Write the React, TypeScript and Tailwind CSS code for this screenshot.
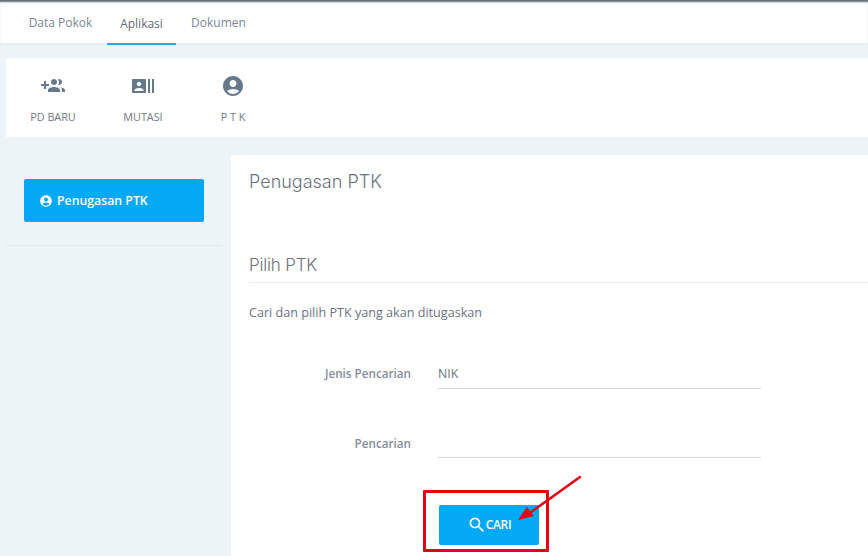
import { MdAccountCircle, MdRecentActors, MdSearch } from "react-icons/md";

const tabs = [
  { label: "Data Pokok", active: false, width: "w-[93px]" },
  { label: "Aplikasi", active: true, width: "w-[69px]" },
  { label: "Dokumen", active: false, width: "w-[85px]" },
];

// group_add versi lama, plus di kiri
function GroupAddIcon({ className }: { className?: string }) {
  return (
    <svg className={className} viewBox="0 0 24 24" fill="currentColor">
      <path d="M8 10H5V7H3v3H0v2h3v3h2v-3h3v-2zm10 1c1.66 0 2.99-1.34 2.99-3S19.66 5 18 5c-.32 0-.63.05-.91.14.57.81.9 1.79.9 2.86s-.34 2.04-.9 2.86c.28.09.59.14.91.14zm-5 0c1.66 0 2.99-1.34 2.99-3S14.66 5 13 5s-3 1.34-3 3 1.34 3 3 3zm6.62 2.16c.83.73 1.38 1.66 1.38 2.84v2h3v-2c0-1.54-2.37-2.49-4.38-2.84zM13 13c-2 0-6 1-6 3v2h12v-2c0-2-4-3-6-3z" />
    </svg>
  );
}

const menus = [
  { label: "PD BARU", icon: GroupAddIcon },
  { label: "MUTASI", icon: MdRecentActors },
  { label: "P T K", icon: MdAccountCircle },
];

export default function App() {
  return (
    <div className="h-[556px] w-[868px] overflow-hidden bg-[#edf4f8] font-['Open_Sans',sans-serif] text-[#6f7a87]">
      {/* Tab atas */}
      <nav className="flex h-[45px] items-stretch border-b-2 border-[#e8eff3] bg-white pl-[14px] shadow-[inset_0_3px_2px_-1px_#5f6a70]">
        {tabs.map((tab) => (
          <div
            key={tab.label}
            className={`${tab.width} -mb-[2px] flex items-center justify-center text-[12px] ${
              tab.active ? "border-b-2 border-[#35a2d8] pt-[5px] text-[#5f6a76]" : "pt-[1px] text-[#7b8794]"
            }`}
          >
            {tab.label}
          </div>
        ))}
      </nav>

      {/* Menu ikon */}
      <div className="mt-[13px] ml-[6px] flex h-[79px] bg-white pl-[2px]">
        {menus.map((menu) => (
          <div key={menu.label} className="flex w-[90px] flex-col items-center pt-[16px]">
            <menu.icon className="h-[24px] w-[24px] text-[#65798b]" />
            <span className="mt-[12px] text-[10.8px] leading-[14px] text-[#6f7a87]">{menu.label}</span>
          </div>
        ))}
      </div>

      <div className="mt-[18px] flex">
        {/* Sidebar */}
        <aside className="ml-[6px] w-[216px]">
          <div className="pt-[24px] pb-[23px] pl-[18px]">
            <button className="flex h-[43px] w-[180px] items-center gap-[4px] rounded-[2px] bg-[#03a9f4] pl-[15px] text-[12.3px] font-semibold text-white">
              <MdAccountCircle className="h-[14px] w-[14px]" />
              <span className="mt-[2px]">Penugasan PTK</span>
            </button>
          </div>
          <div className="border-t border-[#dfe7eb]" />
        </aside>

        {/* Konten */}
        <main className="relative ml-[9px] h-[401px] flex-1 bg-white pl-[18px]">
          <h1 className="pt-[15px] font-['Inter',sans-serif] text-[18px] leading-[24px] font-light text-[#6b7280]">
            Penugasan PTK
          </h1>
          <h2 className="mt-[59px] border-b border-[#e9edf0] pb-[5px] font-['Inter',sans-serif] text-[17px] leading-[24px] font-light tracking-[-0.2px] text-[#6b7280]">
            Pilih PTK
          </h2>
          <p className="mt-[21px] text-[12.6px] leading-[18px] text-[#6b7280]">
            Cari dan pilih PTK yang akan ditugaskan
          </p>

          <div className="mt-[38px] flex items-start">
            <label className="w-[162px] pt-[4px] text-right text-[11.7px] leading-[18px] font-semibold text-[#858d9c]">
              Jenis Pencarian
            </label>
            <div className="ml-[27px] h-[29px] w-[323px] border-b border-[#d6d9de] pt-[5px] text-[12.3px] leading-[18px] text-[#6b7280]">
              NIK
            </div>
          </div>
          <div className="mt-[40px] flex items-start">
            <label className="w-[162px] pt-[5px] text-right text-[11.7px] leading-[18px] font-semibold text-[#858d9c]">
              Pencarian
            </label>
            <div className="ml-[27px] h-[29px] w-[323px] border-b border-[#d6d9de]" />
          </div>

          <div className="mt-[47px] ml-[190px]">
            <button className="flex h-[40px] w-[100px] items-center justify-center gap-0 rounded-[2px] bg-[#03a9f4] text-[12px] font-semibold tracking-[-0.3px] text-white">
              <MdSearch className="-mr-[1px] h-[20px] w-[20px]" />
              CARI
            </button>
          </div>

          {/* Anotasi merah */}
          <div className="absolute top-[335px] left-[192px] h-[62px] w-[126px] rounded-[1px] border-[3px] border-[#e60012]" />
          <svg className="absolute top-[318px] left-[282px]" width="72" height="54" viewBox="0 0 72 54">
            <line x1="67" y1="4" x2="14" y2="42" stroke="#e60012" strokeWidth="2.5" strokeLinecap="round" />
            <polygon points="5,47 14,34 21,43" fill="#e60012" />
          </svg>
        </main>
      </div>
    </div>
  );
}
